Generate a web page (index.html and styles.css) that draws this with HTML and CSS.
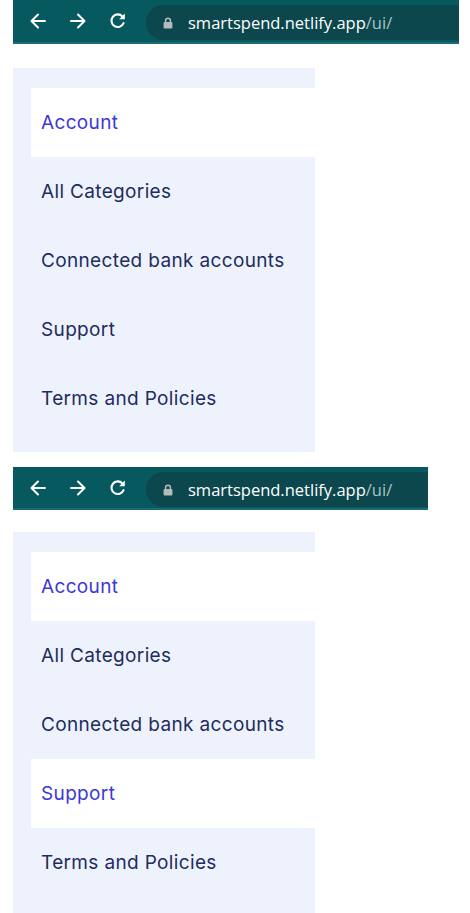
FILE: index.html
```html
<!DOCTYPE html>
<html lang="en">
<head>
<meta charset="utf-8">
<title>SmartSpend UI</title>
<link rel="stylesheet" href="styles.css">
</head>
<body>
<div class="page">
  <div class="shot shot-1">
    <div class="browser-bar bar-wide">
      <div class="nav">
        <svg class="nav-icon" viewBox="0 0 20 20" width="20" height="20"><path d="M17 10H4M10 3.5L3.5 10 10 16.5" fill="none" stroke="#fff" stroke-width="2" stroke-linecap="round" stroke-linejoin="round"/></svg>
        <svg class="nav-icon" viewBox="0 0 20 20" width="20" height="20"><path d="M3 10H16M10 3.5L16.5 10 10 16.5" fill="none" stroke="#fff" stroke-width="2" stroke-linecap="round" stroke-linejoin="round"/></svg>
        <svg class="nav-icon" viewBox="0 0 20 20" width="20" height="20"><path d="M15.6 12.2A6.3 6.3 0 1 1 14.4 5.4" fill="none" stroke="#fff" stroke-width="2.1" stroke-linecap="round"/><path d="M16.8 2.6V8.2H11.2Z" fill="#fff"/></svg>
      </div>
      <div class="url-pill">
        <svg class="lock" viewBox="0 0 10 12" width="10" height="12"><path d="M2.6 5.2V3.6a2.4 2.4 0 0 1 4.8 0v1.6" fill="none" stroke="#b3bcbd" stroke-width="1.5"/><rect x="0.6" y="5" width="8.8" height="6.6" rx="1" fill="#b3bcbd"/></svg>
        <span class="url">smartspend.netlify.app<span class="url-path">/ui/</span></span>
      </div>
    </div>
    <nav class="menu">
      <a class="menu-item active">Account</a>
      <a class="menu-item">All Categories</a>
      <a class="menu-item">Connected bank accounts</a>
      <a class="menu-item">Support</a>
      <a class="menu-item">Terms and Policies</a>
    </nav>
  </div>
  <div class="shot shot-2">
    <div class="browser-bar bar-narrow">
      <div class="nav">
        <svg class="nav-icon" viewBox="0 0 20 20" width="20" height="20"><path d="M17 10H4M10 3.5L3.5 10 10 16.5" fill="none" stroke="#fff" stroke-width="2" stroke-linecap="round" stroke-linejoin="round"/></svg>
        <svg class="nav-icon" viewBox="0 0 20 20" width="20" height="20"><path d="M3 10H16M10 3.5L16.5 10 10 16.5" fill="none" stroke="#fff" stroke-width="2" stroke-linecap="round" stroke-linejoin="round"/></svg>
        <svg class="nav-icon" viewBox="0 0 20 20" width="20" height="20"><path d="M15.6 12.2A6.3 6.3 0 1 1 14.4 5.4" fill="none" stroke="#fff" stroke-width="2.1" stroke-linecap="round"/><path d="M16.8 2.6V8.2H11.2Z" fill="#fff"/></svg>
      </div>
      <div class="url-pill">
        <svg class="lock" viewBox="0 0 10 12" width="10" height="12"><path d="M2.6 5.2V3.6a2.4 2.4 0 0 1 4.8 0v1.6" fill="none" stroke="#b3bcbd" stroke-width="1.5"/><rect x="0.6" y="5" width="8.8" height="6.6" rx="1" fill="#b3bcbd"/></svg>
        <span class="url">smartspend.netlify.app<span class="url-path">/ui/</span></span>
      </div>
    </div>
    <nav class="menu">
      <a class="menu-item active">Account</a>
      <a class="menu-item">All Categories</a>
      <a class="menu-item">Connected bank accounts</a>
      <a class="menu-item active">Support</a>
      <a class="menu-item">Terms and Policies</a>
    </nav>
  </div>
</div>
</body>
</html>
```

FILE: styles.css
```css
* { box-sizing: border-box; }
html, body { margin: 0; padding: 0; background: #ffffff; }
body { font-family: "Inter", "Roboto", "Liberation Sans", sans-serif; overflow: hidden; }

.page {
  padding-left: 13px;
  display: flex;
  flex-direction: column;
}

.shot { display: flex; flex-direction: column; }
.shot-2 { margin-top: 15px; }

.browser-bar {
  height: 44px;
  background: #065a5f;
  border-bottom: 2px solid #1a6c70;
  display: flex;
  align-items: center;
}
.bar-wide { width: 446px; }
.bar-narrow { width: 415px; height: 43px; }

.nav {
  display: flex;
  align-items: center;
  gap: 20px;
  padding-left: 15px;
  width: 133px;
  flex: none;
}
.nav-icon { display: block; flex: none; }

.url-pill {
  flex: 1;
  height: 35px;
  align-self: flex-start;
  margin-top: 5px;
  background: #0c474d;
  border-radius: 18px 0 0 18px;
  display: flex;
  align-items: center;
  padding-left: 17px;
  gap: 15px;
  overflow: hidden;
}
.lock { display: block; flex: none; }
.url {
  font-family: "Open Sans", "Noto Sans", sans-serif;
  font-size: 16.5px;
  color: #ffffff;
  white-space: nowrap;
  letter-spacing: 0;
}
.url-path { color: #a9c3c5; }

.menu {
  margin-top: 24px;
  width: 302px;
  background: #eef2fd;
  padding: 20px 0 19px 18px;
  display: flex;
  flex-direction: column;
}
.shot-2 .menu { margin-top: 22px; padding-bottom: 40px; }

.menu-item {
  height: 69px;
  display: flex;
  align-items: center;
  padding-left: 10px;
  font-size: 19px;
  letter-spacing: 0.35px;
  color: #1e2c5e;
  text-decoration: none;
}
.menu-item.active {
  background: #ffffff;
  color: #3d38d4;
}
```
